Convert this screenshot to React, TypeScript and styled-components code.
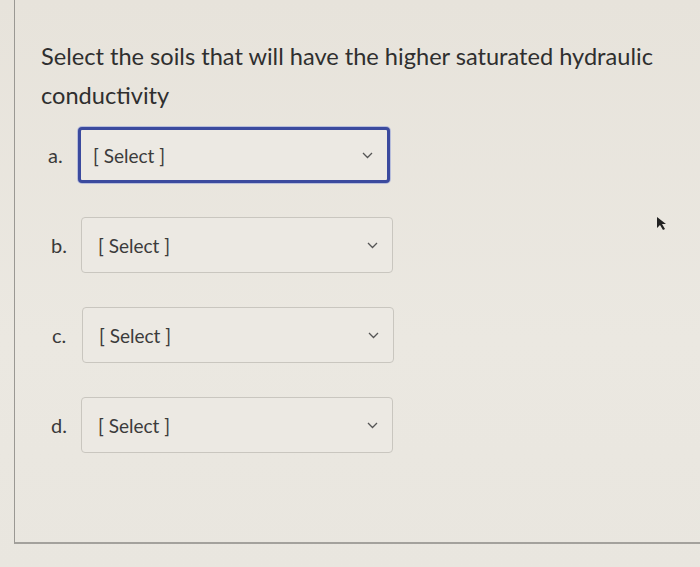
import React from "react";
import styled, { createGlobalStyle } from "styled-components";

const Global = createGlobalStyle`
  html, body { margin: 0; padding: 0; background: #e9e5dd; }
  body { font-family: Lato, "Open Sans", sans-serif; color: #333; }
`;

const Page = styled.div`
  position: relative;
  width: 700px;
  height: 567px;
  overflow: hidden;
  background: linear-gradient(180deg, #e7e3db 0%, #ebe8e1 60%, #e9e6df 100%);
`;

const Panel = styled.div`
  margin-left: 14px;
  height: 544px;
  box-sizing: border-box;
  border-left: 1px solid #9a9893;
  border-bottom: 2px solid #a3a19c;
  padding: 37px 0 0 26px;
`;

const Question = styled.p`
  margin: 0;
  font-size: 23.6px;
  line-height: 39px;
  color: #2f2f2f;
  width: 640px;
`;

const Options = styled.div`
  margin-top: 12px;
  display: flex;
  flex-direction: column;
  gap: 34px;
`;

const Row = styled.div<{ $indent: number }>`
  display: flex;
  align-items: center;
  padding-left: ${(p) => p.$indent}px;
`;

const Letter = styled.span`
  width: 30px;
  font-size: 20px;
  color: #3a3a3a;
  padding-left: 7px;
`;

const SelectBox = styled.div<{ $focused?: boolean }>`
  box-sizing: border-box;
  width: 312px;
  height: 56px;
  display: flex;
  align-items: center;
  justify-content: space-between;
  padding: 0 14px 0 ${(p) => (p.$focused ? 12 : 16)}px;
  border-radius: 4px;
  background: #ece9e3;
  border: ${(p) => (p.$focused ? "3px solid #3b4a9e" : "1px solid #c9c6bf")};
  box-shadow: ${(p) => (p.$focused ? "0 0 0 1px #b7bddb" : "none")};
`;

const Placeholder = styled.span`
  font-size: 19px;
  color: #3b3b3b;
`;

const Chevron = () => (
  <svg width="11" height="7" viewBox="0 0 11 7">
    <path d="M1 1 L5.5 5.5 L10 1" fill="none" stroke="#555" strokeWidth="1.3" />
  </svg>
);

const Cursor = styled.svg`
  position: absolute;
  left: 656px;
  top: 216px;
`;

const items = [
  { l: "a.", indent: 0, focused: true },
  { l: "b.", indent: 3 },
  { l: "c.", indent: 4 },
  { l: "d.", indent: 3 },
];

export default function App() {
  return (
    <Page>
      <Global />
      <Panel>
        <Question>Select the soils that will have the higher saturated hydraulic conductivity</Question>
        <Options>
          {items.map((it) => (
            <Row key={it.l} $indent={it.indent}>
              <Letter>{it.l}</Letter>
              <SelectBox $focused={it.focused}>
                <Placeholder>[ Select ]</Placeholder>
                <Chevron />
              </SelectBox>
            </Row>
          ))}
        </Options>
      </Panel>
      <Cursor width="12" height="16" viewBox="0 0 12 16">
        <path d="M1 1 L1 12 L4 9 L7 14 L9 13 L6 8 L10 8 Z" fill="#222" />
      </Cursor>
    </Page>
  );
}
